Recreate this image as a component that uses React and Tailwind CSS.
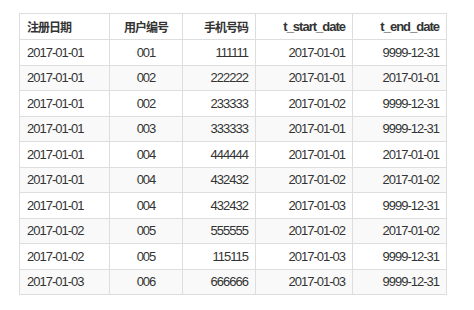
const rows = [
  ["2017-01-01", "001", "111111", "2017-01-01", "9999-12-31"],
  ["2017-01-01", "002", "222222", "2017-01-01", "2017-01-01"],
  ["2017-01-01", "002", "233333", "2017-01-02", "9999-12-31"],
  ["2017-01-01", "003", "333333", "2017-01-01", "9999-12-31"],
  ["2017-01-01", "004", "444444", "2017-01-01", "2017-01-01"],
  ["2017-01-01", "004", "432432", "2017-01-02", "2017-01-02"],
  ["2017-01-01", "004", "432432", "2017-01-03", "9999-12-31"],
  ["2017-01-02", "005", "555555", "2017-01-02", "2017-01-02"],
  ["2017-01-02", "005", "115115", "2017-01-03", "9999-12-31"],
  ["2017-01-03", "006", "666666", "2017-01-03", "9999-12-31"],
];

const align = ["text-left", "text-center", "text-right", "text-right", "text-right"];

export default function App() {
  return (
    <div className="w-[474px] h-[310px] bg-white pt-[13px] pl-[19px] font-['Liberation_Sans','Noto_Sans_CJK_SC',sans-serif] text-[#333]">
      <table className="table-fixed border-collapse border border-[#ddd] w-[427px]">
        <colgroup>
          <col className="w-[90px]" />
          <col className="w-[73px]" />
          <col className="w-[73px]" />
          <col className="w-[97px]" />
          <col className="w-[94px]" />
        </colgroup>
        <thead>
          <tr className="h-[26px]">
            <th className="border border-[#ddd] px-[7px] text-left text-[12px] tracking-[-1px] font-bold font-['Noto_Sans_CJK_SC',sans-serif]">注册日期</th>
            <th className="border border-[#ddd] px-[7px] text-center text-[12px] tracking-[-1px] font-bold font-['Noto_Sans_CJK_SC',sans-serif]">用户编号</th>
            <th className="border border-[#ddd] px-[7px] text-right text-[12px] tracking-[-1px] font-bold font-['Noto_Sans_CJK_SC',sans-serif]">手机号码</th>
            <th className="border border-[#ddd] px-[7px] text-right text-[13px] tracking-[-1px] font-bold">t_start_date</th>
            <th className="border border-[#ddd] px-[7px] text-right text-[13px] tracking-[-1px] font-bold">t_end_date</th>
          </tr>
        </thead>
        <tbody>
          {rows.map((r, i) => (
            <tr key={i} className={`h-[25.5px] ${i % 2 === 1 ? "bg-[#f9f9f9]" : "bg-white"}`}>
              {r.map((c, j) => (
                <td key={j} className={`border border-[#ddd] px-[7px] text-[13px] tracking-[-1px] leading-none ${align[j]}`}>
                  {c}
                </td>
              ))}
            </tr>
          ))}
        </tbody>
      </table>
    </div>
  );
}
